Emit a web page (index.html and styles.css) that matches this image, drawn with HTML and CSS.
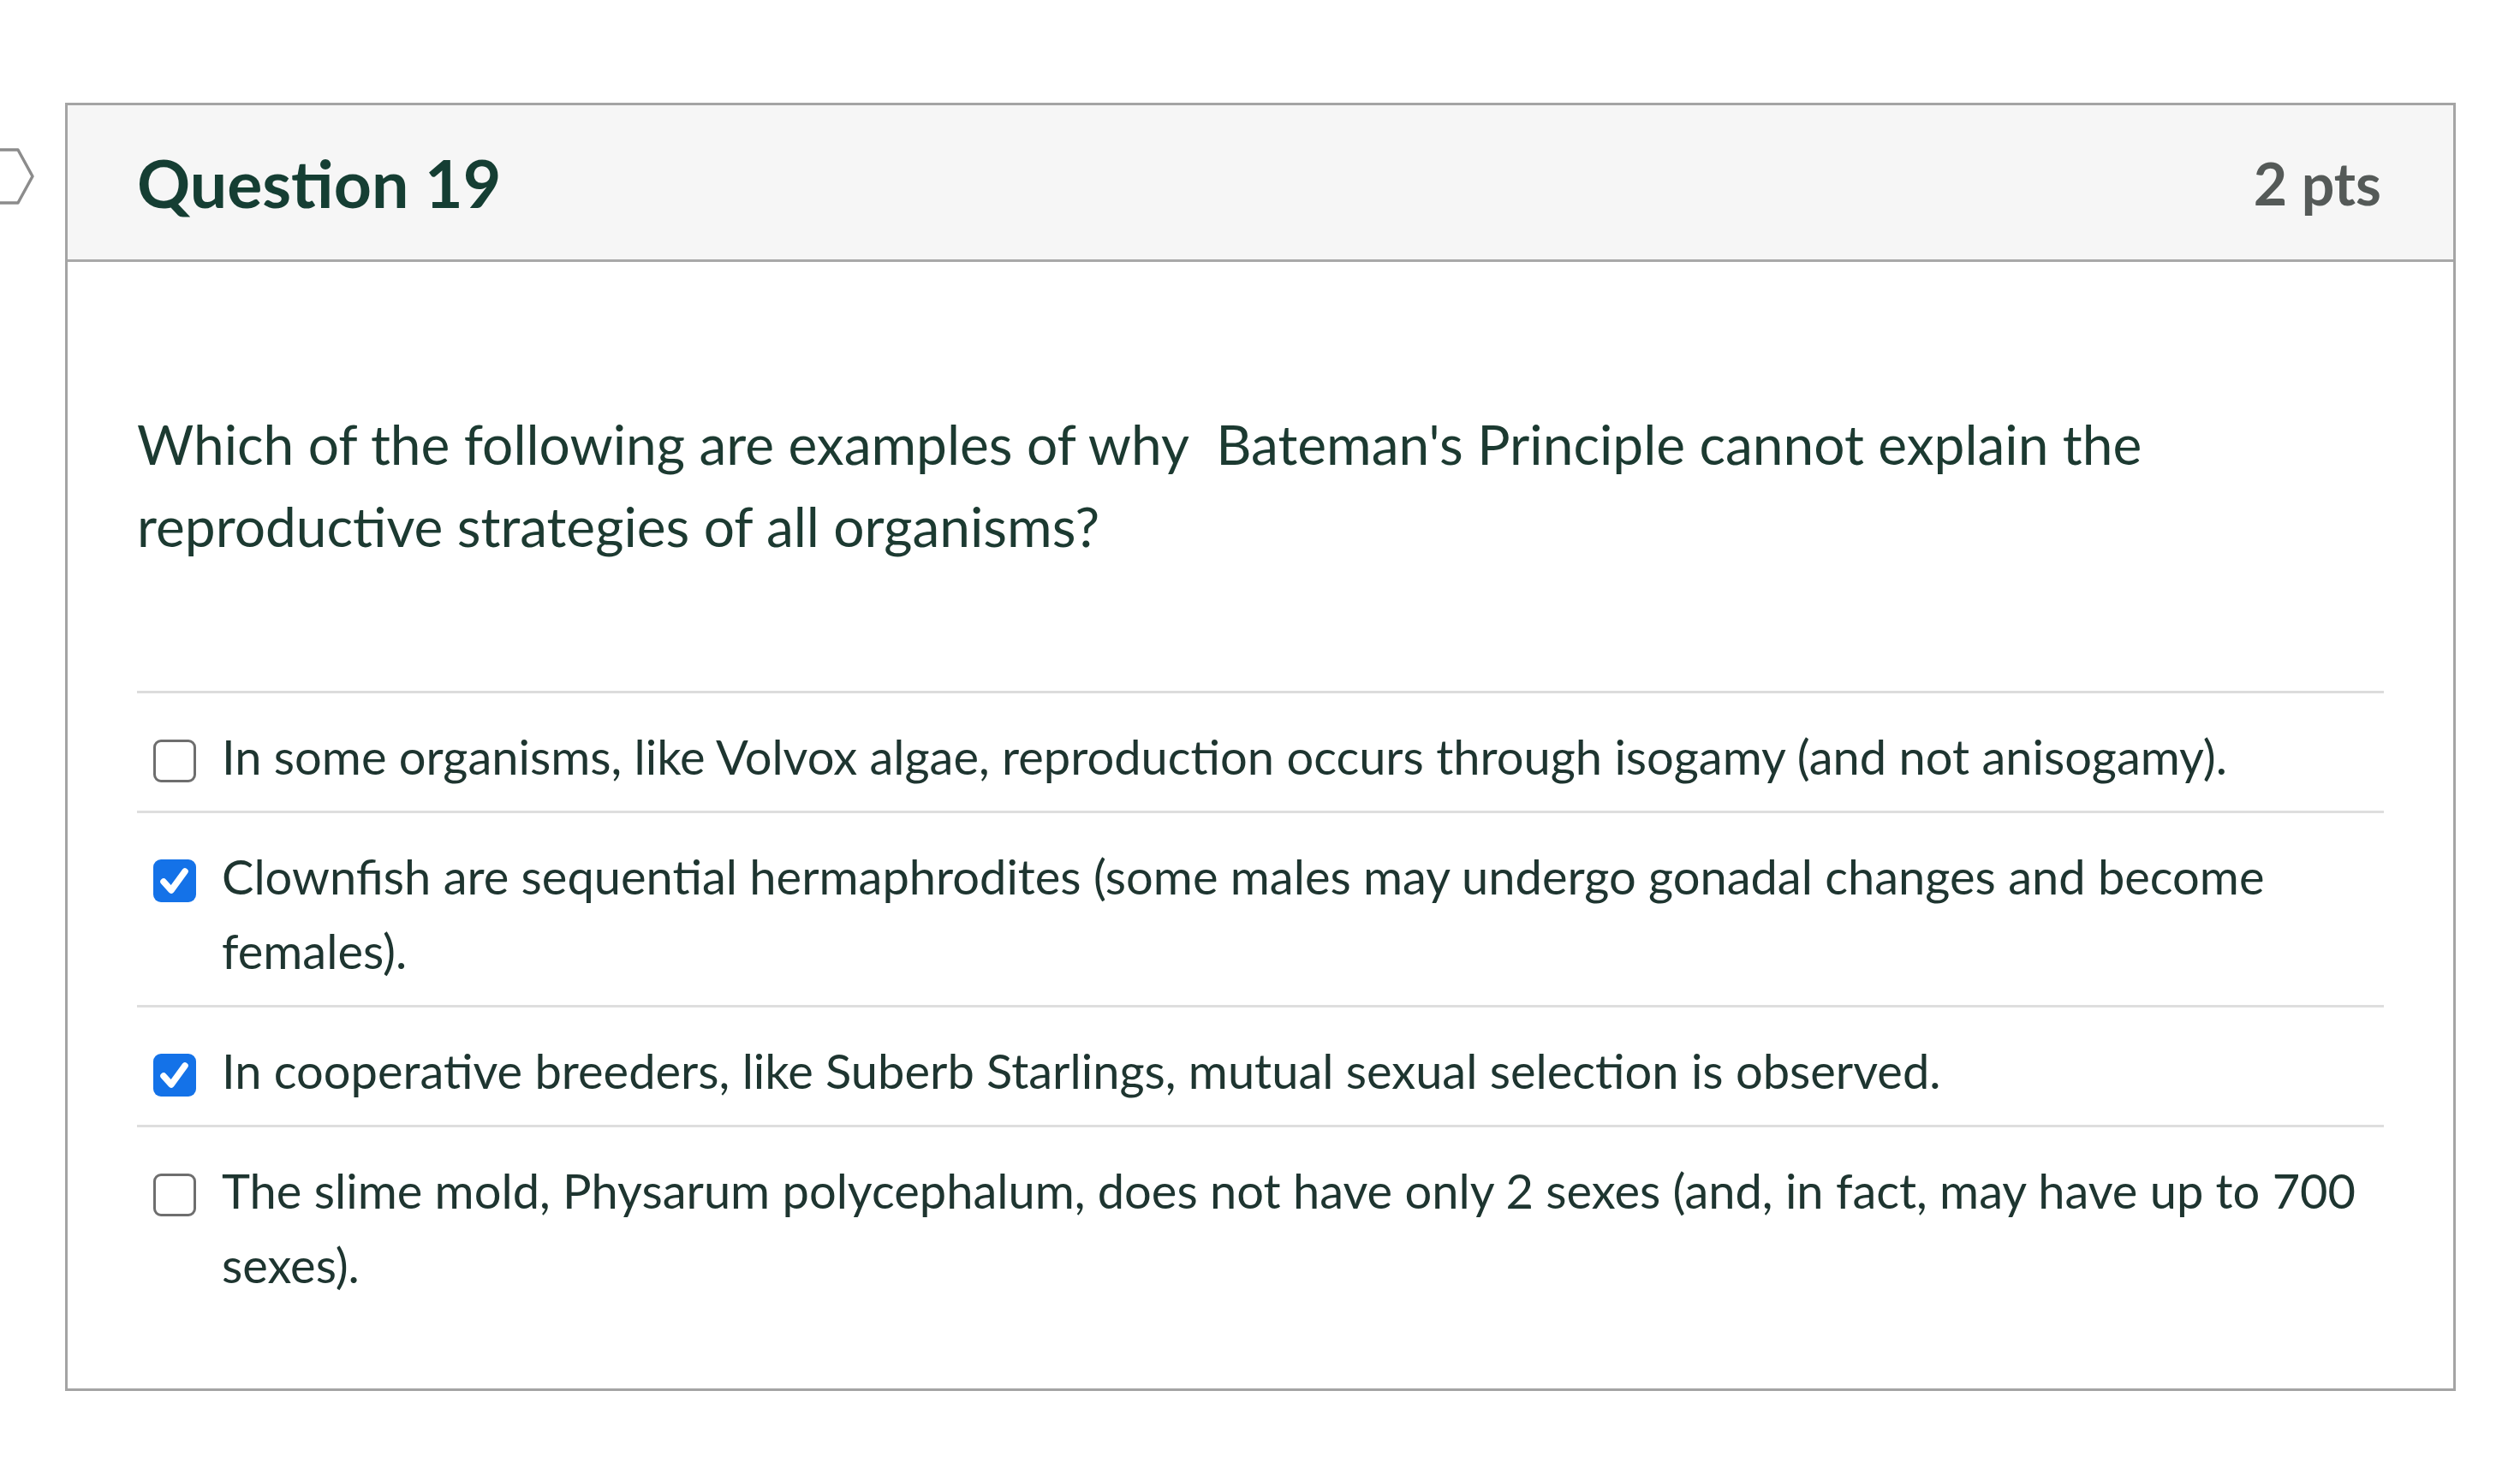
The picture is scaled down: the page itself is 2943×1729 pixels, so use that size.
FILE: index.html
```html
<!DOCTYPE html>
<html lang="en">
<head>
<meta charset="utf-8">
<title>Question 19</title>
<link rel="stylesheet" href="styles.css">
</head>
<body>
<div class="page">
  <div class="flag-col">
    <svg class="flag" width="42" height="68" viewBox="0 0 42 68" aria-hidden="true">
      <path d="M-6 3 H21 L38 34 L21 65 H-6" fill="none" stroke="#8c8c8c" stroke-width="3.5" stroke-linejoin="round"/>
    </svg>
  </div>
  <div class="card">
    <div class="card-header">
      <h2 class="q-title">Question 19</h2>
      <span class="q-points">2 pts</span>
    </div>
    <div class="card-body">
      <p class="q-text">Which of the following are examples of why &nbsp;Bateman's Principle cannot explain the reproductive strategies of all organisms?</p>
      <div class="answers">
        <div class="answer">
          <span class="box"></span>
          <span class="answer-text">In some organisms, like Volvox algae, reproduction occurs through isogamy (and not anisogamy).</span>
        </div>
        <div class="answer">
          <span class="box checked"><svg viewBox="0 0 50 50" width="50" height="50"><path d="M12 26 L21 36 L37 14" fill="none" stroke="#fff" stroke-width="7.5" stroke-linecap="round" stroke-linejoin="round"/></svg></span>
          <span class="answer-text">Clownfish are sequential hermaphrodites (some males may undergo gonadal changes and become females).</span>
        </div>
        <div class="answer">
          <span class="box checked"><svg viewBox="0 0 50 50" width="50" height="50"><path d="M12 26 L21 36 L37 14" fill="none" stroke="#fff" stroke-width="7.5" stroke-linecap="round" stroke-linejoin="round"/></svg></span>
          <span class="answer-text">In cooperative breeders, like Suberb Starlings, mutual sexual selection is observed.</span>
        </div>
        <div class="answer">
          <span class="box"></span>
          <span class="answer-text">The slime mold, Physarum polycephalum, does not have only 2 sexes (and, in fact, may have up to 700 sexes).</span>
        </div>
      </div>
    </div>
  </div>
</div>
</body>
</html>
```

FILE: styles.css
```css
html, body {
  margin: 0;
  padding: 0;
  background: #ffffff;
}

body {
  font-family: Lato, "Open Sans", sans-serif;
  color: #1e3a32;
}

.page {
  display: flex;
  align-items: flex-start;
  padding-top: 120px;
  padding-bottom: 100px;
}

.flag-col {
  width: 76px;
  flex: none;
}

.flag {
  display: block;
  margin-top: 52px;
}

.card {
  width: 2792px;
  box-sizing: border-box;
  border: 3px solid #a4a4a4;
  flex: none;
}

.card-header {
  height: 180px;
  background: #f6f6f6;
  border-bottom: 3px solid #a8a8a8;
  display: flex;
  align-items: center;
  justify-content: space-between;
  padding: 0 84px 0 81px;
}

.q-title {
  margin: 0;
  font-size: 77px;
  font-weight: 700;
  color: #153e33;
  letter-spacing: 0;
}

.q-points {
  font-size: 68px;
  font-weight: 700;
  color: #555a58;
}

.card-body {
  padding: 165px 81px 81px 81px;
}

.q-text {
  margin: 0;
  font-size: 64px;
  line-height: 96px;
  color: #1c3a31;
}

.answers {
  margin-top: 144px;
}

.answer {
  display: flex;
  align-items: flex-start;
  border-top: 3px solid #dedede;
  padding: 30px 0 20px 19px;
}

.answer:first-child {
  border-top-color: #dcdcdc;
}

.box {
  flex: none;
  width: 50px;
  height: 50px;
  box-sizing: border-box;
  border: 3.5px solid #6e6e6e;
  border-radius: 9px;
  margin-top: 24px;
  margin-right: 30px;
  background: #fff;
}

.box.checked {
  border: none;
  background: #1472e8;
}

.box svg {
  display: block;
}

.answer-text {
  font-size: 56px;
  line-height: 87px;
  color: #1e3530;
}
```
